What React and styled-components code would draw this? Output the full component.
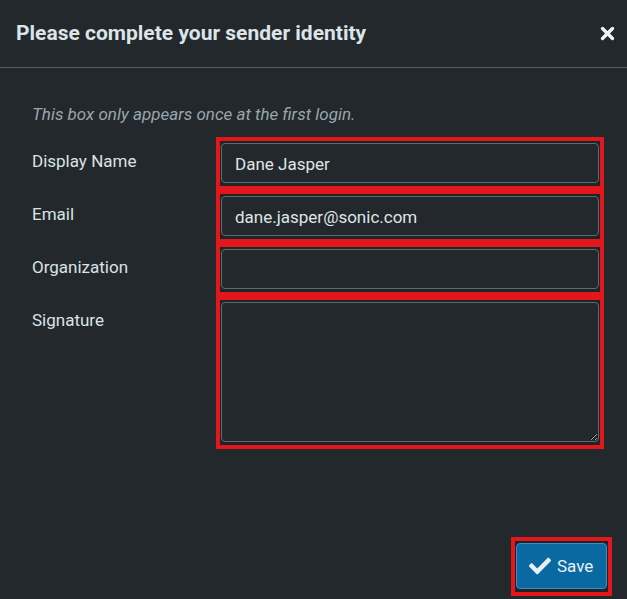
import React from "react";
import styled, { createGlobalStyle } from "styled-components";
import { FaCheck } from "react-icons/fa";

const Global = createGlobalStyle`
  html, body { margin: 0; padding: 0; background: #22282b; }
  body { font-family: Roboto, "Noto Sans", sans-serif; color: #dfe5e8; }
  * { box-sizing: border-box; }
`;

const Dialog = styled.div`
  width: 627px;
  height: 599px;
  display: flex;
  flex-direction: column;
  background: #22282b;
`;

const Header = styled.div`
  height: 68px;
  display: flex;
  align-items: center;
  justify-content: space-between;
  padding: 0 8px 0 16px;
  border-bottom: 1px solid #515e66;
`;

const Title = styled.h1`
  margin: 0;
  font-size: 21px;
  font-weight: 700;
  color: #dde4e8;
  letter-spacing: 0;
  padding-bottom: 2px;
`;

const CloseButton = styled.button`
  width: 24px;
  height: 24px;
  border: 0;
  background: none;
  padding: 0;
  display: flex;
  align-items: center;
  justify-content: center;
  cursor: pointer;
`;

const Body = styled.div`
  flex: 1;
  padding: 34px 23px 0 32px;
`;

const Note = styled.p`
  margin: 0 0 11px;
  font-size: 17px;
  line-height: 24px;
  font-style: italic;
  color: #9aa6ad;
`;

const Form = styled.div`
  display: grid;
  grid-template-columns: 184px 1fr;
`;

const Label = styled.label`
  font-size: 17px;
  line-height: 24px;
  padding-top: 12px;
  color: #dbe2e6;
`;

const Marked = styled.div`
  border: 4px solid #e3161b;
  padding: 2px 1px 3px 1px;
  background: #1f2427;
`;

const Input = styled.input`
  display: block;
  width: 100%;
  height: 40px;
  border: 1px solid #5d6a72;
  border-radius: 4px;
  background: #22282b;
  color: #dfe5e8;
  font-family: Roboto, sans-serif;
  font-size: 17px;
  padding: 2px 13px 0;
  outline: none;
`;

const TextArea = styled.textarea`
  display: block;
  width: 100%;
  height: 140px;
  border: 1px solid #5d6a72;
  border-radius: 4px;
  background: #22282b;
  color: #dfe5e8;
  font-family: Roboto, sans-serif;
  font-size: 17px;
  padding: 8px 13px;
  resize: both;
  outline: none;
`;

const Footer = styled.div`
  display: flex;
  justify-content: flex-end;
  padding: 0 15px 3px 0;
`;

const SaveButton = styled.button`
  display: flex;
  align-items: center;
  gap: 6px;
  height: 46px;
  width: 91px;
  padding: 0 0 0 12px;
  border: 1px solid #3d8cc2;
  border-radius: 4px;
  background: #0b69a1;
  color: #e9f1f6;
  font-family: Roboto, sans-serif;
  font-size: 17px;
  cursor: pointer;
`;

const fields = [
  { label: "Display Name", value: "Dane Jasper" },
  { label: "Email", value: "dane.jasper@sonic.com" },
  { label: "Organization", value: "" },
];

export default function App() {
  return (
    <>
      <Global />
      <Dialog>
        <Header>
          <Title>Please complete your sender identity</Title>
          <CloseButton aria-label="Close">
            <svg width="15" height="15" viewBox="0 0 15 15">
              <path d="M2.5 2.5 L12.5 12.5 M12.5 2.5 L2.5 12.5" stroke="#eef3f5" strokeWidth="3.4" strokeLinecap="round" />
            </svg>
          </CloseButton>
        </Header>
        <Body>
          <Note>This box only appears once at the first login.</Note>
          <Form>
            {fields.map((f) => (
              <React.Fragment key={f.label}>
                <Label>{f.label}</Label>
                <Marked>
                  <Input defaultValue={f.value} />
                </Marked>
              </React.Fragment>
            ))}
            <Label>Signature</Label>
            <Marked>
              <TextArea />
            </Marked>
          </Form>
        </Body>
        <Footer>
          <Marked>
            <SaveButton>
              <FaCheck size={22} />
              Save
            </SaveButton>
          </Marked>
        </Footer>
      </Dialog>
    </>
  );
}
